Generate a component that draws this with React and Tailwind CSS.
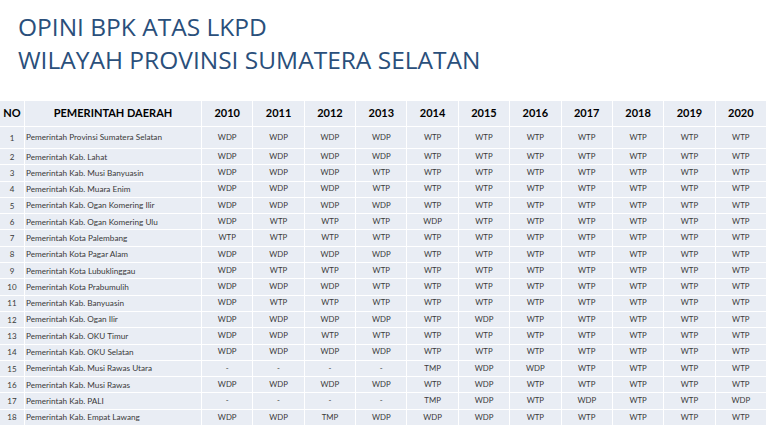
import React from "react";

const years = ["2010","2011","2012","2013","2014","2015","2016","2017","2018","2019","2020"];
const W7 = ["WTP","WTP","WTP","WTP","WTP","WTP","WTP"];
const rows = [
  ["Pemerintah Provinsi Sumatera Selatan", ["WDP","WDP","WDP","WDP",...W7]],
  ["Pemerintah Kab. Lahat", ["WDP","WDP","WDP","WDP",...W7]],
  ["Pemerintah Kab. Musi Banyuasin", ["WDP","WDP","WDP","WTP",...W7]],
  ["Pemerintah Kab. Muara Enim", ["WDP","WDP","WDP","WTP",...W7]],
  ["Pemerintah Kab. Ogan Komering Ilir", ["WDP","WDP","WDP","WDP",...W7]],
  ["Pemerintah Kab. Ogan Komering Ulu", ["WDP","WTP","WTP","WTP","WDP","WTP","WTP","WTP","WTP","WTP","WTP"]],
  ["Pemerintah Kota Palembang", ["WTP","WTP","WTP","WTP",...W7]],
  ["Pemerintah Kota Pagar Alam", ["WDP","WDP","WDP","WDP",...W7]],
  ["Pemerintah Kota Lubuklinggau", ["WDP","WTP","WTP","WTP",...W7]],
  ["Pemerintah Kota Prabumulih", ["WDP","WDP","WDP","WTP",...W7]],
  ["Pemerintah Kab. Banyuasin", ["WDP","WTP","WTP","WTP",...W7]],
  ["Pemerintah Kab. Ogan Ilir", ["WDP","WDP","WDP","WDP","WTP","WDP","WTP","WTP","WTP","WTP","WTP"]],
  ["Pemerintah Kab. OKU Timur", ["WDP","WDP","WTP","WTP",...W7]],
  ["Pemerintah Kab. OKU Selatan", ["WDP","WDP","WDP","WDP",...W7]],
  ["Pemerintah Kab. Musi Rawas Utara", ["-","-","-","-","TMP","WDP","WDP","WTP","WTP","WTP","WTP"]],
  ["Pemerintah Kab. Musi Rawas", ["WDP","WDP","WDP","WDP","WTP","WDP","WTP","WTP","WTP","WTP","WTP"]],
  ["Pemerintah Kab. PALI", ["-","-","-","-","TMP","WDP","WTP","WDP","WTP","WTP","WDP"]],
  ["Pemerintah Kab. Empat Lawang", ["WDP","WDP","TMP","WDP","WDP","WDP","WTP","WTP","WTP","WTP","WTP"]],
];

export default function App() {
  return (
    <div className="w-[768px] h-[432px] bg-white overflow-hidden relative" style={{ fontFamily: "Lato, 'Open Sans', sans-serif" }}>
      <div className="pl-[18px] pt-[10px] text-[#2a4f7b] text-[24.5px] leading-[33px]" style={{ fontFamily: "'Open Sans', Lato, sans-serif" }}>
        <div>OPINI BPK ATAS LKPD</div>
        <div>WILAYAH PROVINSI SUMATERA SELATAN</div>
      </div>
      <div className="mt-[25px] w-[766px] grid grid-cols-[24px_176px_repeat(11,1fr)] gap-px bg-white">
        <div className="h-[25px] bg-[#e9edf4] flex items-center justify-center font-bold text-[11px] text-black">NO</div>
        <div className="h-[25px] bg-[#e9edf4] flex items-center justify-center font-bold text-[11px] text-black">PEMERINTAH DAERAH</div>
        {years.map((y) => (
          <div key={y} className="h-[25px] bg-[#e9edf4] flex items-center justify-center font-bold text-[11px] text-black">{y}</div>
        ))}
        {rows.map(([name, vals], i) => (
          <React.Fragment key={i}>
            <div className={`${i === 0 ? "h-[21px]" : "h-[15.3px]"} bg-[#e9edf4] flex items-center justify-center text-[8px] text-[#3a3a3a]`}>{i + 1}</div>
            <div className={`${i === 0 ? "h-[21px]" : "h-[15.3px]"} bg-[#e9edf4] flex items-center pl-[1px] text-[8.2px] text-[#3a3a3a]`}>{name}</div>
            {vals.map((v, j) => (
              <div key={j} className={`${i === 0 ? "h-[21px]" : "h-[15.3px]"} bg-[#e9edf4] flex items-center justify-center text-[7.8px] text-[#3a3a3a]`}>{v}</div>
            ))}
          </React.Fragment>
        ))}
      </div>
    </div>
  );
}
